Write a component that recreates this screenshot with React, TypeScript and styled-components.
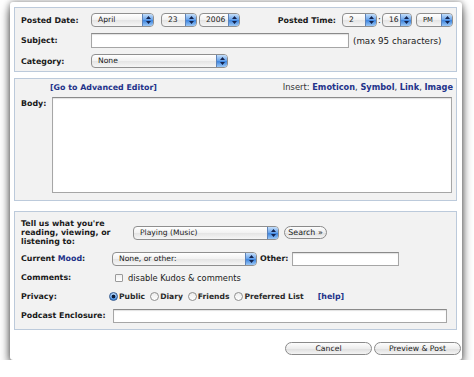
import React from 'react';
import styled, {createGlobalStyle} from 'styled-components';

const GlobalStyle = createGlobalStyle`
  html, body {
    margin: 0;
    padding: 0;
    background: #fff;
  }
  body {
    font-family: 'DejaVu Sans', Verdana, sans-serif;
    color: #1a1a1a;
  }
  * {
    box-sizing: border-box;
  }
`;

type SelectProps = {
  w: number;
  mr?: number;
  children?: React.ReactNode;
};

const Arrows = () => (
  <svg width="5" height="8" viewBox="0 0 5 8">
    <path d="M2.5 0 L5 3 L0 3 Z M0 5 L5 5 L2.5 8 Z" fill="#14244f" />
  </svg>
);

const Select = ({w, mr, children}: SelectProps) => (
  <SelectBox $w={w} $mr={mr}>
    <SelectText>{children}</SelectText>
    <SelectCap>
      <Arrows />
    </SelectCap>
  </SelectBox>
);

const Radio = ({on, children}: {on?: boolean; children: React.ReactNode}) => (
  <RadioItem>
    <RadioDot $on={on} />
    {children}
  </RadioItem>
);

const App = () => {
  return (
    <>
      <GlobalStyle />
      <Page>
        <Window>
          <Panel $h={65}>
            <DateRows>
              <Row $h={14}>
                <Label $w={70}>Posted Date:</Label>
                <Select w={63} mr={7}>
                  April
                </Select>
                <Select w={36} mr={2}>
                  23
                </Select>
                <Select w={41}>2006</Select>
                <TimeGroup>
                  <Label $mr={6}>Posted Time:</Label>
                  <Select w={35}>2</Select>
                  <Colon>:</Colon>
                  <Select w={30} mr={4}>
                    16
                  </Select>
                  <Select w={37}>
                    <Small>PM</Small>
                  </Select>
                </TimeGroup>
              </Row>
              <Row $h={15}>
                <Label $w={70}>Subject:</Label>
                <TextField $w={258} $mr={4} />
                <Hint>(max 95 characters)</Hint>
              </Row>
              <Row $h={14}>
                <Label $w={70}>Category:</Label>
                <Select w={137}>None</Select>
              </Row>
            </DateRows>
          </Panel>

          <Panel $h={123} $top={6}>
            <BodyGrid>
              <span />
              <EditorBar>
                <LinkText href="#">[Go to Advanced Editor]</LinkText>
                <InsertText>
                  Insert: <LinkText href="#">Emoticon</LinkText>,{' '}
                  <LinkText href="#">Symbol</LinkText>,{' '}
                  <LinkText href="#">Link</LinkText>,{' '}
                  <LinkText href="#">Image</LinkText>
                </InsertText>
              </EditorBar>
              <BodyLabel>Body:</BodyLabel>
              <BodyArea />
            </BodyGrid>
          </Panel>

          <Panel $h={119} $top={10}>
            <ExtraRows>
              <Row $h={27}>
                <MultiLabel>
                  Tell us what you're
                  <br />
                  reading, viewing, or
                  <br />
                  listening to:
                </MultiLabel>
                <Select w={146} mr={5}>
                  Playing (Music)
                </Select>
                <PillButton $w={43} $size={7.9}>
                  Search »
                </PillButton>
              </Row>
              <Row $h={15}>
                <Label $w={91}>
                  Current <LinkText href="#">Mood</LinkText>:
                </Label>
                <Select w={145} mr={3}>
                  None, or other:
                </Select>
                <Label $mr={3}>Other:</Label>
                <TextField $w={107} $h={14} />
              </Row>
              <Row $h={15}>
                <Label $w={91}>Comments:</Label>
                <CheckBox />
                <Plain>disable Kudos &amp; comments</Plain>
              </Row>
              <Row $h={15}>
                <Label $w={88}>Privacy:</Label>
                <RadioGroup>
                  <Radio on>Public</Radio>
                  <Radio>Diary</Radio>
                  <Radio>Friends</Radio>
                  <Radio>Preferred List</Radio>
                </RadioGroup>
                <HelpLink href="#">[help]</HelpLink>
              </Row>
              <Row $h={15}>
                <Label $w={92}>Podcast Enclosure:</Label>
                <TextField $w={334} $h={14} />
              </Row>
            </ExtraRows>
          </Panel>

          <Footer>
            <PillButton $w={87}>Cancel</PillButton>
            <PillButton $w={87}>Preview &amp; Post</PillButton>
          </Footer>
        </Window>
      </Page>
    </>
  );
};
export default App;

const Page = styled.div`
  padding: 2px 12px 0 10px;
`;

const Window = styled.div`
  width: 452px;
  height: 358px;
  background: #fff;
  border-radius: 3px;
  box-shadow: 0 6px 11px rgba(0, 0, 0, 0.6), 0 0 6px rgba(0, 0, 0, 0.4);
  padding: 5px 1px 0 4px;
  display: flex;
  flex-direction: column;
`;

const Panel = styled.div<{$h: number; $top?: number}>`
  width: 443px;
  height: ${({$h}) => $h}px;
  margin-top: ${({$top}) => $top || 0}px;
  background: #f2f2f2;
  border: 1px solid #bccadb;
`;

const DateRows = styled.div`
  display: flex;
  flex-direction: column;
  gap: 6px;
  padding: 5px 3px 0 6px;
`;

const ExtraRows = styled.div`
  display: flex;
  flex-direction: column;
  gap: 4px;
  padding: 7px 3px 0 6px;
  & > :first-child {
    margin-bottom: 1px;
  }
`;

const Row = styled.div<{$h: number}>`
  display: flex;
  align-items: center;
  height: ${({$h}) => $h}px;
`;

const Label = styled.span<{$w?: number; $mr?: number}>`
  flex: 0 0 ${({$w}) => ($w ? `${$w}px` : 'auto')};
  margin-right: ${({$mr}) => $mr || 0}px;
  font-size: 7.9px;
  font-weight: bold;
  white-space: nowrap;
  color: #1a1a1a;
`;

const MultiLabel = styled.span`
  flex: 0 0 112px;
  font-size: 7.9px;
  font-weight: bold;
  line-height: 9px;
  color: #1a1a1a;
`;

const TimeGroup = styled.div`
  margin-left: auto;
  display: flex;
  align-items: center;
`;

const Colon = styled.span`
  flex: 0 0 5px;
  text-align: center;
  font-size: 8.3px;
`;

const Small = styled.span`
  font-size: 6.8px;
`;

const SelectBox = styled.div<{$w: number; $mr?: number}>`
  display: flex;
  flex: 0 0 ${({$w}) => $w}px;
  width: ${({$w}) => $w}px;
  height: 14px;
  margin-right: ${({$mr}) => $mr || 0}px;
  border: 1px solid #8f8f8f;
  border-radius: 4px;
  background: linear-gradient(#ffffff, #f1f1f1 50%, #e4e4e4 51%, #f6f6f6);
  overflow: hidden;
`;

const SelectText = styled.span`
  flex: 1;
  padding-left: 6px;
  font-size: 7.6px;
  line-height: 12px;
  white-space: nowrap;
  overflow: hidden;
  color: #1a1a1a;
`;

const SelectCap = styled.span`
  flex: 0 0 11px;
  display: flex;
  align-items: center;
  justify-content: center;
  border-left: 1px solid #5d82b8;
  background: linear-gradient(#c4defa, #6ea7ec 45%, #3f86df 55%, #9cc8f6);
`;

const TextField = styled.input<{$w: number; $h?: number; $mr?: number}>`
  flex: 0 0 ${({$w}) => $w}px;
  width: ${({$w}) => $w}px;
  min-width: 0;
  height: ${({$h}) => $h || 15}px;
  margin: 0 ${({$mr}) => $mr || 0}px 0 0;
  padding: 0;
  border: 1px solid #a6a6a6;
  border-top-color: #8a8a8a;
  background: #fff;
  box-shadow: inset 0 1px 1px rgba(0, 0, 0, 0.12);
  outline: none;
`;

const Hint = styled.span`
  font-size: 8.7px;
  color: #1a1a1a;
  white-space: nowrap;
`;

const BodyGrid = styled.div`
  display: grid;
  grid-template-columns: 31px 400px;
  grid-template-rows: 10px 96px;
  row-gap: 5px;
  padding: 3px 0 0 6px;
`;

const EditorBar = styled.div`
  display: flex;
  justify-content: space-between;
  align-items: center;
  margin-left: -2px;
  margin-right: -1px;
  font-size: 7.9px;
  white-space: nowrap;
`;

const InsertText = styled.span`
  font-size: 8.4px;
  color: #333;
  & > a {
    font-size: 8.2px;
  }
`;

const LinkText = styled.a`
  color: #23338a;
  font-weight: bold;
  text-decoration: none;
`;

const HelpLink = styled(LinkText)`
  margin-left: 14px;
  font-size: 7.9px;
`;

const BodyLabel = styled.span`
  font-size: 7.9px;
  font-weight: bold;
  padding-top: 2px;
`;

const BodyArea = styled.textarea`
  width: 400px;
  height: 96px;
  margin: 0;
  padding: 0;
  resize: none;
  border: 1px solid #a6a6a6;
  border-top-color: #8a8a8a;
  background: #fff;
  box-shadow: inset 0 1px 1px rgba(0, 0, 0, 0.12);
  outline: none;
`;

const PillButton = styled.button<{$w: number; $size?: number}>`
  flex: 0 0 ${({$w}) => $w}px;
  width: ${({$w}) => $w}px;
  height: 13px;
  padding: 0;
  border: 1px solid #8a8a8a;
  border-radius: 7px;
  background: linear-gradient(#fdfdfd, #ededed 50%, #dedede 51%, #f4f4f4);
  font-family: 'DejaVu Sans', Verdana, sans-serif;
  font-size: ${({$size}) => $size || 7.7}px;
  line-height: 11px;
  color: #1a1a1a;
`;

const CheckBox = styled.span`
  flex: 0 0 8px;
  height: 8px;
  margin: 0 5px 0 3px;
  border: 1px solid #9a9a9a;
  border-radius: 1px;
  background: linear-gradient(#f0f0f0, #ffffff);
`;

const Plain = styled.span`
  font-size: 8.3px;
  white-space: nowrap;
`;

const RadioGroup = styled.div`
  display: flex;
  align-items: center;
  gap: 5px;
`;

const RadioItem = styled.span`
  display: flex;
  align-items: center;
  gap: 1px;
  font-size: 7.6px;
  font-weight: bold;
  white-space: nowrap;
  color: #2a2a2a;
`;

const RadioDot = styled.span<{$on?: boolean}>`
  flex: 0 0 9px;
  height: 9px;
  border-radius: 50%;
  border: 1px solid ${({$on}) => ($on ? '#2f578f' : '#8f8f8f')};
  background: ${({$on}) =>
    $on
      ? 'radial-gradient(circle, #0e1b36 0 1.5px, transparent 2.2px), linear-gradient(#b6d6f8, #3f88de)'
      : 'linear-gradient(#ececec, #ffffff)'};
`;

const Footer = styled.div`
  display: flex;
  justify-content: flex-end;
  gap: 2px;
  margin-top: 12px;
`;
